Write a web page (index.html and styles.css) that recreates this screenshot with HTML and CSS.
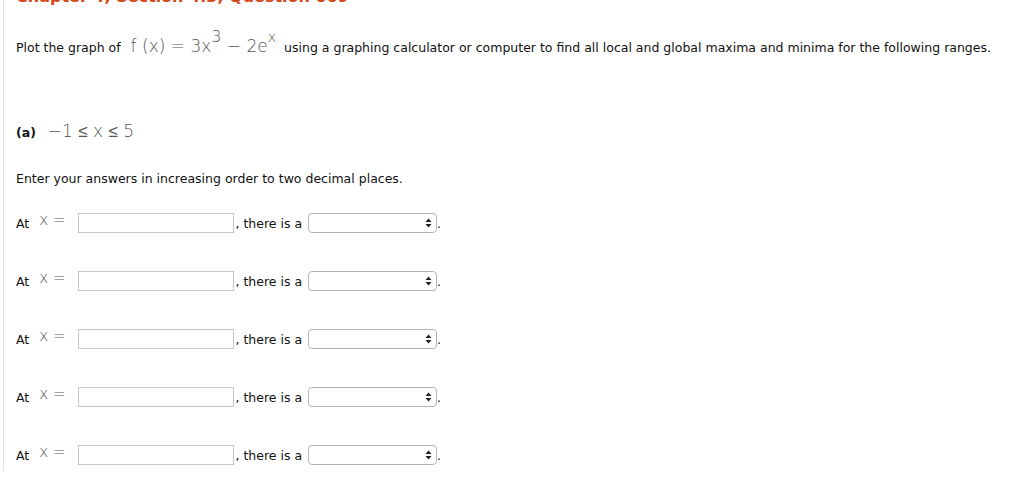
FILE: index.html
```html
<!DOCTYPE html>
<html>
<head>
<meta charset="utf-8">
<link rel="stylesheet" href="styles.css">
</head>
<body>
<div class="page">
  <h2 class="title">Chapter 4, Section 4.3, Question 009</h2>
  <p class="prompt">Plot the graph of <span class="math fx"><i>f</i> (<i>x</i>) = 3<i>x</i><sup>3</sup> − 2<i>e</i><sup><i>x</i></sup></span> using a graphing calculator or computer to find all local and global maxima and minima for the following ranges.</p>
  <p class="part"><b>(a)</b> <span class="math range">−1 ≤ <i>x</i> ≤ 5</span></p>
  <p class="note">Enter your answers in increasing order to two decimal places.</p>
  <div class="rows">
    <div class="row">At <span class="math xeq"><i>x</i> =</span> <span class="box"></span><span class="comma">, there is a</span> <span class="sel"><svg width="7" height="10" viewBox="0 0 7 10"><path d="M3.5 0.5 L6.5 4 H0.5Z M3.5 9.5 L6.5 6 H0.5Z" fill="#222"/></svg></span>.</div>
    <div class="row">At <span class="math xeq"><i>x</i> =</span> <span class="box"></span><span class="comma">, there is a</span> <span class="sel"><svg width="7" height="10" viewBox="0 0 7 10"><path d="M3.5 0.5 L6.5 4 H0.5Z M3.5 9.5 L6.5 6 H0.5Z" fill="#222"/></svg></span>.</div>
    <div class="row">At <span class="math xeq"><i>x</i> =</span> <span class="box"></span><span class="comma">, there is a</span> <span class="sel"><svg width="7" height="10" viewBox="0 0 7 10"><path d="M3.5 0.5 L6.5 4 H0.5Z M3.5 9.5 L6.5 6 H0.5Z" fill="#222"/></svg></span>.</div>
    <div class="row">At <span class="math xeq"><i>x</i> =</span> <span class="box"></span><span class="comma">, there is a</span> <span class="sel"><svg width="7" height="10" viewBox="0 0 7 10"><path d="M3.5 0.5 L6.5 4 H0.5Z M3.5 9.5 L6.5 6 H0.5Z" fill="#222"/></svg></span>.</div>
    <div class="row">At <span class="math xeq"><i>x</i> =</span> <span class="box"></span><span class="comma">, there is a</span> <span class="sel"><svg width="7" height="10" viewBox="0 0 7 10"><path d="M3.5 0.5 L6.5 4 H0.5Z M3.5 9.5 L6.5 6 H0.5Z" fill="#222"/></svg></span>.</div>
  </div>
</div>
</body>
</html>
```
FILE: styles.css
```css
html, body {
  margin: 0;
  padding: 0;
  background: #fff;
  overflow: hidden;
}
body {
  font-family: "DejaVu Sans", Verdana, sans-serif;
  font-size: 12.5px;
  color: #111;
}
.page {
  margin-left: 3px;
  border-left: 1px solid #dde4ee;
  padding-left: 12px;
  height: 482px;
}
.title {
  margin: -11px 0 0 0;
  height: 16px;
  font-size: 16px;
  font-weight: bold;
  color: #d34a1c;
  line-height: 16px;
}
.prompt {
  margin: 31px 0 0 0;
  line-height: 20px;
  white-space: nowrap;
}
.math {
  font-family: "DejaVu Sans", sans-serif;
  font-weight: 200;
  color: #555;
}
.math i {
  font-style: normal;
}
.fx {
  font-size: 17px;
  margin: 0 4px 0 6px;
}
.fx sup {
  font-size: 16px;
  vertical-align: 10px;
  line-height: 0;
}
.fx sup i {
  font-size: 14px;
}
.part {
  margin: 63px 0 0 0;
  line-height: 20px;
}
.part b {
  font-size: 12.5px;
}
.range {
  font-size: 17px;
  margin-left: 8px;
}
.note {
  margin: 26px 0 0 0;
  line-height: 20px;
}
.rows {
  margin-top: 23px;
  display: flex;
  flex-direction: column;
  gap: 36px;
}
.row {
  display: flex;
  align-items: center;
  height: 22px;
  white-space: pre;
}
.xeq {
  font-size: 15px;
  margin-left: 6px;
  margin-right: 13px;
  position: relative;
  top: -3px;
}
.box {
  display: inline-block;
  width: 154px;
  height: 18px;
  border: 1px solid #c8c8c8;
  background: #fff;
}
.comma {
  margin-left: 1px;
}
.sel {
  display: inline-flex;
  align-items: center;
  justify-content: flex-end;
  box-sizing: border-box;
  width: 129px;
  height: 20px;
  margin-left: 6px;
  border: 1px solid #b5b5b5;
  border-radius: 4px;
  padding-right: 4px;
  background: #fff;
}
```
